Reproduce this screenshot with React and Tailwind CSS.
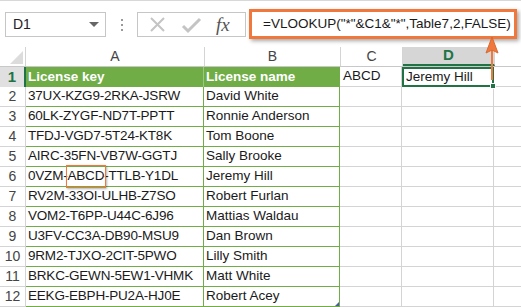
import React from "react";

const rows = [
  ["37UX-KZG9-2RKA-JSRW", "David White"],
  ["60LK-ZYGF-ND7T-PPTT", "Ronnie Anderson"],
  ["TFDJ-VGD7-5T24-KT8K", "Tom Boone"],
  ["AIRC-35FN-VB7W-GGTJ", "Sally Brooke"],
  ["0VZM-ABCD-TTLB-Y1DL", "Jeremy Hill"],
  ["RV2M-33OI-ULHB-Z7SO", "Robert Furlan"],
  ["VOM2-T6PP-U44C-6J96", "Mattias Waldau"],
  ["U3FV-CC3A-DB90-MSU9", "Dan Brown"],
  ["9RM2-TJXO-2CIT-5PWO", "Lilly Smith"],
  ["BRKC-GEWN-5EW1-VHMK", "Matt White"],
  ["EEKG-EBPH-PU2A-HJ0E", "Robert Acey"],
];

const font = { fontFamily: '"Liberation Sans", Arial, sans-serif' };

export default function App() {
  return (
    <div className="relative w-[521px] h-[307px] overflow-hidden bg-white text-[#1a1a1a]" style={font}>
      {/* formula bar */}
      <div className="h-[47px] border-t border-[#d8d8d8] flex items-start pt-[11px] pl-[5px]">
        <div className="w-[101px] h-[25px] border border-[#c6c6c6] flex items-center justify-between pl-[7px] pr-[6px] text-[14px] text-[#222]">
          <span>D1</span>
          <span className="w-0 h-0 border-l-[5px] border-r-[5px] border-t-[5px] border-l-transparent border-r-transparent border-t-[#666]" />
        </div>
        <div className="w-[31px] h-[25px] flex flex-col items-center justify-center gap-[3px]">
          <span className="w-[2px] h-[2px] bg-[#999]" />
          <span className="w-[2px] h-[2px] bg-[#999]" />
          <span className="w-[2px] h-[2px] bg-[#999]" />
        </div>
        <div className="w-[109px] h-[25px] border border-[#c6c6c6] flex items-center">
          <svg width="34" height="20" viewBox="0 0 34 20" className="ml-[3px]">
            <path d="M10 3 L23 16 M23 3 L10 16" stroke="#c4c4c4" strokeWidth="2" fill="none" />
          </svg>
          <svg width="34" height="20" viewBox="0 0 34 20">
            <path d="M8 11 L13 16 L25 4" stroke="#c4c4c4" strokeWidth="3" fill="none" />
          </svg>
          <span className="ml-[7px] text-[19px] italic text-[#555] leading-none" style={{ fontFamily: '"Liberation Serif", serif' }}>fx</span>
        </div>
        <div className="ml-[3px] -mt-[3px] w-[268px] h-[30px] border-[3px] border-[#f0783c] shadow-[2px_2px_4px_rgba(0,0,0,0.35)] flex items-center pl-[11px] text-[13.5px] text-[#1a1a1a] whitespace-nowrap">
          =VLOOKUP("*"&amp;C1&amp;"*",Table7,2,FALSE)
        </div>
      </div>

      {/* column headers */}
      <div className="flex h-[20px] border-b border-[#c8c8c8] text-[14px] text-[#444]">
        <div className="relative w-[26px] border-r border-[#d4d4d4]">
          <div className="absolute right-[2px] bottom-[2px] w-0 h-0" style={{ borderLeft: "13px solid transparent", borderBottom: "13px solid #dcdcdc" }} />
        </div>
        <div className="w-[179px] border-r border-[#d4d4d4] flex items-center justify-center">A</div>
        <div className="w-[136px] border-r border-[#d4d4d4] flex items-center justify-center">B</div>
        <div className="w-[62px] border-r border-[#d4d4d4] flex items-center justify-center">C</div>
        <div className="w-[92px] bg-[#d6d6d6] border-r border-[#d4d4d4] border-b-2 border-b-[#217346] flex items-center justify-center font-bold text-[#217346] text-[15px]">D</div>
        <div className="flex-1" />
      </div>

      {/* row 1 */}
      <div className="flex h-[20px] text-[13.5px]">
        <div className="w-[26px] bg-[#e0e0e0] border-r-2 border-r-[#217346] flex items-center justify-center font-bold text-[#217346] text-[15px]">1</div>
        <div className="w-[178px] bg-[#70ad47] text-white font-bold flex items-center pl-[2px] border-r border-[#9bc77f]">License key</div>
        <div className="w-[136px] bg-[#70ad47] text-white font-bold flex items-center pl-[2px]">License name</div>
        <div className="w-[62px] border-r border-b border-[#d4d4d4] flex items-center pl-[3px]">ABCD</div>
        <div className="relative w-[92px] border-2 border-[#217346] flex items-center pl-[2px]">
          Jeremy Hill
          <span className="absolute -right-[4px] -bottom-[4px] w-[6px] h-[6px] bg-[#217346] border border-white" />
        </div>
        <div className="flex-1 border-b border-[#d4d4d4]" />
      </div>

      {rows.map((r, i) => (
        <div key={i} className="flex h-[20px] text-[13.5px]">
          <div className="w-[26px] border-r border-b border-[#d4d4d4] flex items-center justify-center text-[#444] text-[14px]">{i + 2}</div>
          <div className="w-[178px] border-r border-b border-[#70ad47] flex items-center pl-[2px] whitespace-nowrap tracking-[-0.2px]">
            {i === 4 ? (
              <>
                0VZM-
                <span className="relative">
                  ABCD
                  <span className="absolute -left-[2px] -right-[2px] -top-[1px] -bottom-[1px] border border-[#f0783c] shadow-[1px_1px_2px_rgba(0,0,0,0.3)]" />
                </span>
                -TTLB-Y1DL
              </>
            ) : (
              r[0]
            )}
          </div>
          <div className="relative w-[136px] border-r border-b border-[#70ad47] flex items-center pl-[2px]">
            {r[1]}
            {i === rows.length - 1 && (
              <span className="absolute right-0 bottom-0 w-0 h-0" style={{ borderLeft: "4px solid transparent", borderBottom: "4px solid #4a5ba8" }} />
            )}
          </div>
          <div className="w-[62px] border-r border-b border-[#d4d4d4]" />
          <div className="w-[92px] border-r border-b border-[#d4d4d4]" />
          <div className="flex-1 border-b border-[#d4d4d4]" />
        </div>
      ))}

      {/* arrow */}
      <svg className="absolute left-[482px] top-[36px]" width="20" height="46" viewBox="0 0 20 46">
        <path d="M10 14 L10 44" stroke="#f0783c" strokeWidth="2" />
        <path d="M10 1 L4 17 L10 14 L16 17 Z" fill="#f0783c" stroke="#d86a30" strokeWidth="1" />
      </svg>
    </div>
  );
}
